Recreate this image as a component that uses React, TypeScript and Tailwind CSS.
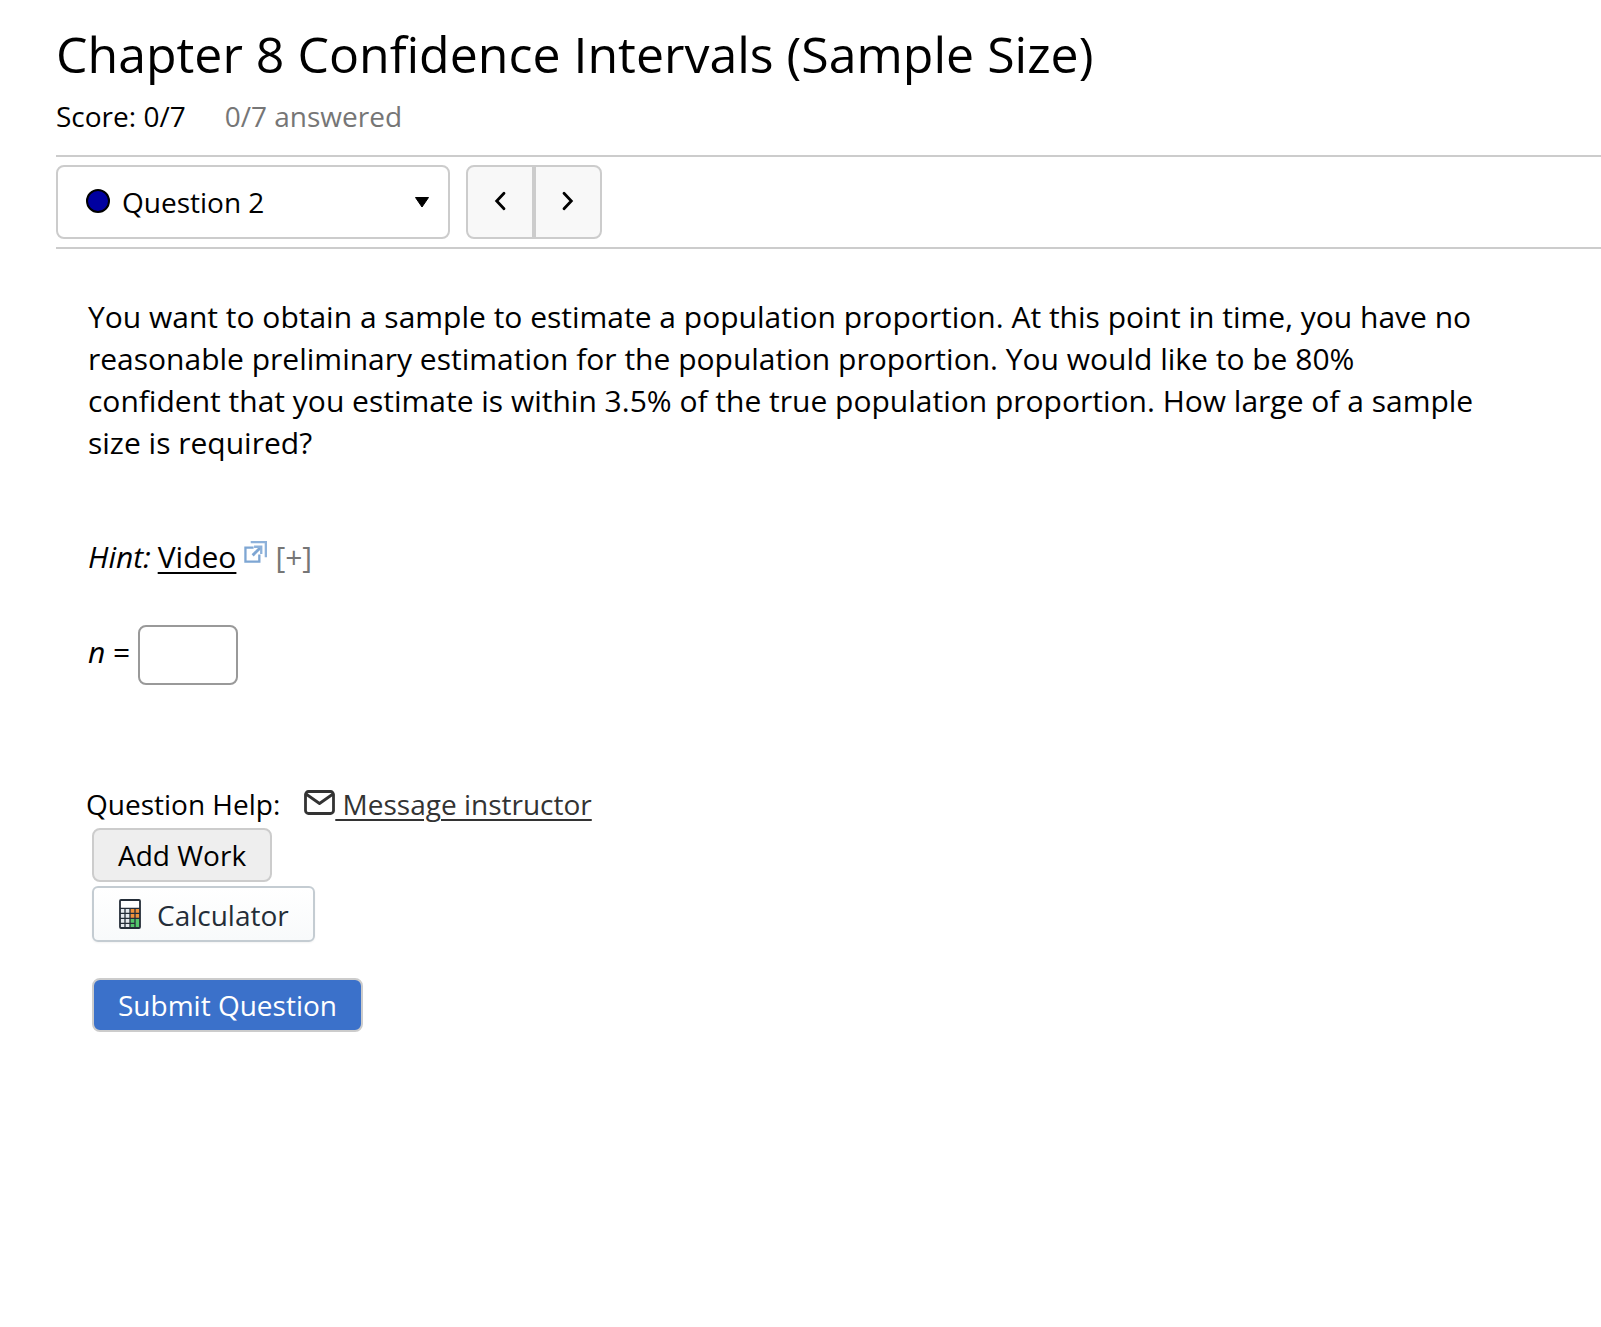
import { useState } from "react";
import type { ReactNode } from "react";

const QUESTIONS = [1, 2, 3, 4, 5, 6, 7];

export default function App() {
  const [current, setCurrent] = useState(2);
  const [answer, setAnswer] = useState("");

  return (
    <main className="bg-white pt-[23px] pb-12 pl-14 text-[28px] leading-[38px] text-black font-['Open_Sans','Noto_Sans',sans-serif]">
      <h1 className="text-[50px] leading-[62px]">Chapter 8 Confidence Intervals (Sample Size)</h1>
      <div className="mt-3 flex gap-[39px]">
        <span>Score: 0/7</span>
        <span className="text-[#767676]">0/7 answered</span>
      </div>

      <nav className="mt-5 flex gap-4 border-y-2 border-[#cccccc] py-2">
        <div className="flex w-[394px] items-center rounded-lg border-2 border-[#cccccc] pr-[18px] pl-7">
          <span className="mb-0.5 size-6 shrink-0 rounded-full border-2 border-black bg-[#0000a0]" />
          <select
            aria-label="Question"
            value={current}
            onChange={(e) => setCurrent(Number(e.target.value))}
            className="ml-3 min-w-0 flex-1 appearance-none bg-transparent outline-none"
          >
            {QUESTIONS.map((q) => (
              <option key={q} value={q}>
                Question {q}
              </option>
            ))}
          </select>
          <svg width="16" height="12" viewBox="0 0 16 12" className="shrink-0" aria-hidden="true">
            <path d="M1.5 1.5h13L8 11z" stroke="#000" strokeLinejoin="round" />
          </svg>
        </div>
        <div className="flex">
          <NavButton
            label="Previous question"
            className="rounded-l-lg"
            onClick={() => setCurrent((c) => Math.max(1, c - 1))}
          >
            <path d="M15 3.300 7.700 11l7.300 7.700" />
          </NavButton>
          <NavButton
            label="Next question"
            className="rounded-r-lg"
            onClick={() => setCurrent((c) => Math.min(QUESTIONS.length, c + 1))}
          >
            <path d="M7 3.300 14.300 11 7 18.700" />
          </NavButton>
        </div>
      </nav>

      <section className="pt-[47px] pr-[116px] pl-8 text-[30px] leading-[42px]">
        <p>
          You want to obtain a sample to estimate a population proportion. At this point in time, you
          have no reasonable preliminary estimation for the population proportion. You would like to be
          80% confident that you estimate is within 3.5% of the true population proportion. How large of
          a sample size is required?
        </p>
        <p className="mt-[72px] flex">
          <i>Hint:</i>
          <a href="#video" className="ml-[7px] underline decoration-2 underline-offset-4">
            Video
          </a>
          <ExternalIcon />
          <button type="button" aria-label="Show video" className="text-[#767676]">
            [+]
          </button>
        </p>
        <div className="mt-[47px] flex items-center gap-2">
          <label htmlFor="answer" className="pb-1.5">
            <i>n</i> =
          </label>
          <input
            id="answer"
            type="text"
            value={answer}
            onChange={(e) => setAnswer(e.target.value)}
            className="h-[60px] w-[100px] rounded-lg border-2 border-[#999999] px-3 outline-none"
          />
        </div>
      </section>

      <section className="mt-[100px] pl-[30px]">
        <div className="flex gap-6">
          <span>Question Help:</span>
          <a
            href="#message"
            className="flex items-start whitespace-pre text-[#333333] underline decoration-2 underline-offset-4"
          >
            <MailIcon />
            {" Message instructor"}
          </a>
        </div>
        <div className="mt-[5px] ml-1.5 flex flex-col items-start">
          <button
            type="button"
            className="h-[54px] rounded-lg border-2 border-[#cccccc] bg-[#eeeeee] px-6"
          >
            Add Work
          </button>
          <button
            type="button"
            className="mt-1 flex h-14 items-center gap-4 rounded-md border-2 border-[#c4ccd2] bg-linear-to-b from-white to-[#f8fafb] pt-0.5 pr-6 pl-[25px] text-[#242d38] shadow-xs"
          >
            <CalculatorIcon />
            Calculator
          </button>
          <button
            type="submit"
            className="mt-9 h-[54px] rounded-lg border-2 border-[#cccccc] bg-[#3b71ca] px-6 text-white"
          >
            Submit Question
          </button>
        </div>
      </section>
    </main>
  );
}

function NavButton({
  label,
  className,
  onClick,
  children,
}: {
  label: string;
  className: string;
  onClick: () => void;
  children: ReactNode;
}) {
  return (
    <button
      type="button"
      aria-label={label}
      onClick={onClick}
      className={`flex h-[74px] w-[68px] items-center justify-center border-2 border-[#cccccc] bg-[#f8f8f8] pb-0.5 ${className}`}
    >
      <svg
        width="22"
        height="22"
        viewBox="0 0 22 22"
        fill="none"
        stroke="#000"
        strokeWidth="2.800"
        strokeLinecap="round"
        aria-hidden="true"
      >
        {children}
      </svg>
    </button>
  );
}

function ExternalIcon() {
  return (
    <svg width="23" height="23" viewBox="0 0 24 24" fill="none" className="mx-2 mt-[5px]" aria-hidden="true">
      <path d="M7 1.2h15.8V17" stroke="#8db1da" strokeWidth="2.4" />
      <path d="M10 7H1.5v14.5H16V14" stroke="#7ea6d3" strokeWidth="2.4" />
      <path d="M9 15l8-8" stroke="#7ea6d3" strokeWidth="3" />
      <path d="M10.5 6H18v7.500" stroke="#8db1da" strokeWidth="2.400" />
    </svg>
  );
}

function MailIcon() {
  return (
    <svg
      width="31"
      height="25"
      viewBox="0 0 31 25"
      fill="none"
      stroke="#333"
      strokeWidth="2.800"
      strokeLinejoin="round"
      className="mt-[5px]"
      aria-hidden="true"
    >
      <rect x="1.500" y="1.500" width="28" height="22" rx="3" />
      <path d="M2 4 15.500 13.500 29 4" />
    </svg>
  );
}

function CalculatorIcon() {
  return (
    <svg width="22" height="30" viewBox="0 0 22 30" className="mb-0.5" aria-hidden="true">
      <rect x="1" y="1" width="20" height="28" rx="1" fill="#e4e9ed" />
      <path d="M1 1h20v8H1z" fill="#fff" />
      <path d="M11 9h10v10H11z" fill="#f0923b" />
      <path d="M11 19h10v10H11z" fill="#53c66c" />
      <g fill="none" stroke="#242d38" strokeWidth="1.300">
        <path d="M1 9.300h20M1 14.300h20M1 19.300h20M1 24.300h15M6 9v20M11 9v20M16 9v20" />
        <rect x="1" y="1" width="20" height="28" rx="1" strokeWidth="1.800" />
      </g>
    </svg>
  );
}
